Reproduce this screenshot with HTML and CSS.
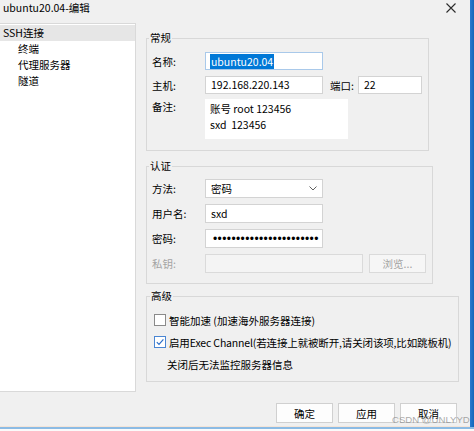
FILE: index.html
```html
<!DOCTYPE html>
<html lang="zh-CN">
<head>
    <title>ubuntu20.04-编辑</title>
    <meta charset="utf-8"/>
    <link rel="stylesheet" href="styles.css">
</head>
<body>

<div class="screen">
    <div class="dialog">
        <div class="titlebar">
            <span class="title">ubuntu20.04-编辑</span>
            <svg class="close" width="10" height="10" viewBox="0 0 10 10">
                <path d="M0.5 0.5 L9.5 9.5 M9.5 0.5 L0.5 9.5" stroke="#2b2b2b" stroke-width="1.1" fill="none"/>
            </svg>
        </div>

        <div class="main">
            <div class="tree">
                <div class="node selected">SSH连接</div>
                <div class="node child">终端</div>
                <div class="node child">代理服务器</div>
                <div class="node child">隧道</div>
            </div>

            <div class="panels">
                <fieldset class="group general">
                    <legend>常规</legend>
                    <div class="row">
                        <span class="label">名称:</span>
                        <div class="field w-main focus"><span class="sel">ubuntu20.04</span></div>
                    </div>
                    <div class="row gap6">
                        <span class="label">主机:</span>
                        <div class="field w-main">192.168.220.143</div>
                        <span class="label port">端口:</span>
                        <div class="field w-port">22</div>
                    </div>
                    <div class="row memo-row">
                        <span class="label">备注:</span>
                        <div class="memo">账号 root 123456<br>sxd&nbsp; 123456</div>
                    </div>
                </fieldset>

                <fieldset class="group auth">
                    <legend>认证</legend>
                    <div class="row tall">
                        <span class="label">方法:</span>
                        <div class="field w-main select">
                            <span>密码</span>
                            <svg width="8" height="5" viewBox="0 0 8 5">
                                <path d="M0.5 0.5 L4 4 L7.5 0.5" stroke="#606060" stroke-width="1" fill="none"/>
                            </svg>
                        </div>
                    </div>
                    <div class="row tall">
                        <span class="label">用户名:</span>
                        <div class="field w-main">sxd</div>
                    </div>
                    <div class="row tall">
                        <span class="label">密码:</span>
                        <div class="field w-main"><span class="caret"></span><span class="dots">•••••••••••••••••••••••</span></div>
                    </div>
                    <div class="row tall">
                        <span class="label disabled">私钥:</span>
                        <div class="field w-key off"></div>
                        <div class="btn browse">浏览...</div>
                    </div>
                </fieldset>

                <fieldset class="group advanced">
                    <legend>高级</legend>
                    <div class="check-row">
                        <span class="box"></span>
                        <span>智能加速 (加速海外服务器连接)</span>
                    </div>
                    <div class="check-row">
                        <span class="box on">
                            <svg width="10" height="10" viewBox="0 0 10 10">
                                <path d="M1.8 5.2 L4 7.4 L8.4 2.4" stroke="#2c6fc9" stroke-width="1.2" fill="none"/>
                            </svg>
                        </span>
                        <span class="narrow">启用Exec Channel(若连接上就被断开,请关闭该项,比如跳板机)</span>
                    </div>
                    <div class="check-row note">关闭后无法监控服务器信息</div>
                </fieldset>
            </div>
        </div>

        <div class="buttons">
            <div class="btn">确定</div>
            <div class="btn">应用</div>
            <div class="btn">取消</div>
        </div>
    </div>
    <div class="edge"></div>
</div>
<div class="taskbar"></div>

<div class="watermark">CSDN @UNLYYD</div>

</body>
</html>
```

FILE: styles.css
```css
body {
    margin: 0;
    width: 474px;
    height: 431px;
    overflow: hidden;
    background: #f0f0f0;
    color: #000;
    font-family: "Noto Sans CJK SC", sans-serif;
    font-size: 10.5px;
    position: relative;
}

.screen {
    display: flex;
    height: 427px;
}

.dialog {
    width: 470px;
    height: 427px;
    box-sizing: border-box;
    border-bottom: 1px solid #f3e4d8;
}

.edge {
    width: 4px;
    background: linear-gradient(to right, #2a7ad0, #1565b8);
}

.taskbar {
    height: 4px;
    border-top: 2px solid #8cbbe4;
    box-sizing: border-box;
    background: #fafafa;
}

/* 标题栏 */
.titlebar {
    height: 23px;
    display: flex;
    justify-content: space-between;
    align-items: flex-start;
    padding: 1px 14px 0 3px;
    box-sizing: border-box;
    line-height: 14px;
}

.close {
    margin-top: 2px;
}

.main {
    display: flex;
    gap: 10px;
    height: 369px;
}

/* 左侧树 */
.tree {
    width: 136px;
    height: 369px;
    box-sizing: border-box;
    background: #fff;
    border: 1px solid #d9d9d9;
    border-left: none;
    padding-top: 1px;
}

.node {
    height: 16px;
    line-height: 16px;
    padding-left: 3px;
    white-space: nowrap;
}

.node.selected {
    background: #e6e6e6;
}

.node.child {
    padding-left: 18px;
}

.panels {
    display: flex;
    flex-direction: column;
    padding-top: 7px;
}

/* 分组框 */
.group {
    margin: 0;
    border: 1px solid #d8d8d8;
    box-sizing: border-box;
    padding: 6px 5px 11px 5px;
    min-width: 0;
}

.group legend {
    padding: 0 1px;
    margin-left: -3px;
    line-height: 16px;
}

.general {
    width: 283px;
}

.auth {
    width: 287px;
    margin-top: 7px;
    padding-top: 5px;
    padding-bottom: 10px;
}

.advanced {
    width: 313px;
    margin-top: 4px;
    padding: 5px 6px 6px 6px;
}

.row {
    display: flex;
    align-items: center;
    height: 18px;
}

.row + .row {
    margin-top: 6px;
}

.row.tall {
    height: 19px;
}

.row.memo-row {
    height: 40px;
    align-items: flex-start;
    margin-top: 5px;
}

.memo-row .label {
    line-height: 16px;
}

.label {
    width: 53px;
    flex: none;
    white-space: nowrap;
}

.label.port {
    width: 28px;
    margin-left: 7px;
}

.label.disabled {
    color: #a3a3a3;
}

/* 输入框 */
.field {
    height: 100%;
    box-sizing: border-box;
    background: #fff;
    border: 1px solid #d3d3d3;
    padding: 0 5px;
    line-height: 16px;
    white-space: nowrap;
    display: flex;
    align-items: center;
}

.w-main {
    width: 118px;
}

.w-port {
    width: 64px;
}

.w-key {
    width: 158px;
}

.field.focus {
    border-color: #a9c9ea;
    padding-left: 4px;
}

.field.off {
    background: #f4f4f4;
    border-color: #dadada;
}

.sel {
    background: #0078d7;
    color: #fff;
    line-height: 15px;
    padding: 0 1px;
}

.select {
    justify-content: space-between;
    padding-right: 5px;
}

.caret {
    width: 1px;
    height: 3px;
    background: #444;
    margin-right: 2px;
}

.dots {
    font-family: "Liberation Sans", sans-serif;
    font-size: 12px;
    letter-spacing: 0.4px;
}

.memo {
    width: 143px;
    height: 40px;
    box-sizing: border-box;
    background: #fff;
    padding: 2px 5px;
    line-height: 16px;
    white-space: nowrap;
}

/* 按钮 */
.btn {
    width: 57px;
    height: 20px;
    box-sizing: border-box;
    background: #fdfdfd;
    border: 1px solid #d0d0d0;
    display: flex;
    align-items: center;
    justify-content: center;
}

.btn.browse {
    height: 19px;
    margin-left: 6px;
    background: #f6f6f6;
    border-color: #dadada;
    color: #a3a3a3;
}

.buttons {
    display: flex;
    justify-content: flex-end;
    gap: 5px;
    padding-right: 13px;
    margin-top: 11px;
}

/* 复选框 */
.check-row {
    display: flex;
    align-items: center;
    height: 22px;
    white-space: nowrap;
}

.narrow {
    letter-spacing: -0.15px;
}

.box {
    width: 12px;
    height: 12px;
    box-sizing: border-box;
    border: 1px solid #8a8a8a;
    background: #fff;
    margin: 0 3px 0 1px;
    display: flex;
    align-items: center;
    justify-content: center;
}

.box.on {
    border-color: #4a86d3;
}

.check-row.note {
    padding-left: 14px;
}

.watermark {
    position: absolute;
    left: 392px;
    top: 414px;
    white-space: nowrap;
    font-family: "Liberation Sans", sans-serif;
    font-size: 9.6px;
    color: rgba(140, 140, 140, 0.75);
}
```
